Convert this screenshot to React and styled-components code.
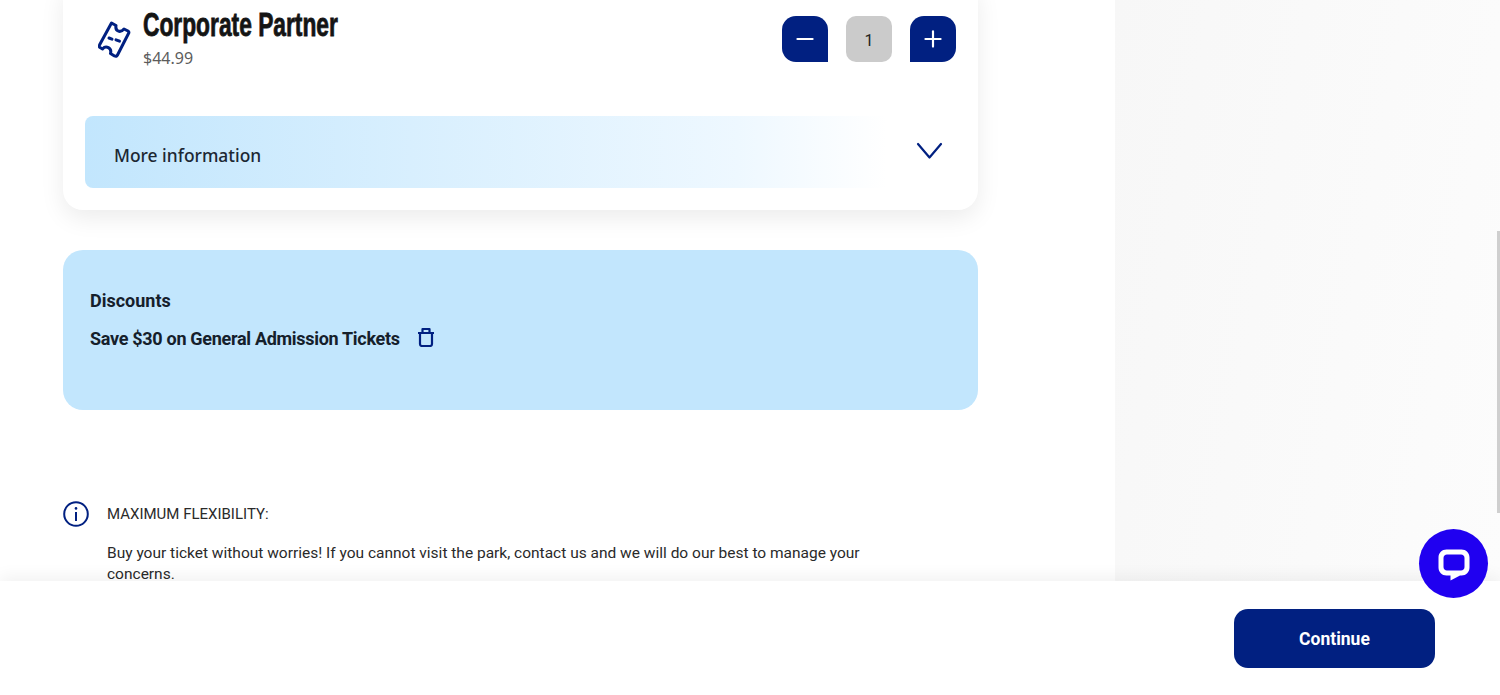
import React from 'react';
import styled, { createGlobalStyle } from 'styled-components';
import { Minus, Plus } from 'lucide-react';

const navy = '#012081';

const Global = createGlobalStyle`
	html, body {
		margin: 0;
		height: 100%;
		overflow: hidden;
		background: #fff;
	}
	* {
		box-sizing: border-box;
	}
`;

const TicketIcon = () => (
	<svg width="34" height="38" viewBox="7 4 34 38" fill="none" stroke={navy} strokeWidth="3" strokeLinejoin="round" strokeLinecap="round" style={{ flexShrink: 0 }}>
		<path d="M20.5 7 L25 9.5 C24 15 29 17.5 33 13 L37 15 Q38.5 16 37.5 17.5 L26.5 39 Q25.5 41 23.5 40 L19.5 37.5 C21 32 15 29 11.5 33 L9 31.5 Q7.5 30.5 8.5 29 Z" />
		<path d="M18 22 L21 23.2 M25 23.8 L28.5 25.2" />
	</svg>
);

const TrashIcon = () => (
	<svg width="18" height="20" viewBox="0 0 18 20" fill="none" stroke={navy} strokeWidth="2.2" strokeLinejoin="round">
		<path d="M3 6 H15 V17 Q15 19 13 19 H5 Q3 19 3 17 Z" />
		<path d="M1 6 H17 M5.5 6 V2 H12.5 V6" />
	</svg>
);

const InfoIcon = () => (
	<svg width="26" height="26" viewBox="0 0 26 26" fill="none" stroke={navy} strokeWidth="2" style={{ flexShrink: 0 }}>
		<circle cx="13" cy="13" r="11.8" />
		<path d="M13 11 V20" />
		<circle cx="13" cy="7.4" r="1.3" fill={navy} stroke="none" />
	</svg>
);

const ChevronIcon = () => (
	<svg width="27" height="18" viewBox="0 0 27 18" fill="none" stroke={navy} strokeWidth="2.2" strokeLinecap="round" strokeLinejoin="round">
		<path d="M2 2 L13.5 15.5 L25 2" />
	</svg>
);

const ChatIcon = () => (
	<svg width="34" height="34" viewBox="0 0 34 34" fill="none">
		<path
			fillRule="evenodd"
			clipRule="evenodd"
			fill="#fff"
			d="M9.5 2.5 H24.5 C29 2.5 32.5 6 32.5 10.5 V20.5 C32.5 25 29 28.5 24.5 28.5 H23 L13.5 33.5 V28.5 H9.5 C5 28.5 1.5 25 1.5 20.5 V10.5 C1.5 6 5 2.5 9.5 2.5 Z M10 7.5 C8 7.5 6.5 9 6.5 11 V20 C6.5 22 8 23.5 10 23.5 H24 C26 23.5 27.5 22 27.5 20 V11 C27.5 9 26 7.5 24 7.5 Z"
		/>
	</svg>
);

const App = () => {
	return (
		<Page>
			<Global />
			<Body>
				<Main>
					<Card>
						<TicketRow>
							<TicketInfo>
								<TicketIcon />
								<div>
									<TicketName>Corporate Partner</TicketName>
									<Price>$44.99</Price>
								</div>
							</TicketInfo>
							<Stepper>
								<StepButton side="left">
									<Minus size={26} strokeWidth={2} />
								</StepButton>
								<Qty>1</Qty>
								<StepButton side="right">
									<Plus size={26} strokeWidth={2} />
								</StepButton>
							</Stepper>
						</TicketRow>
						<MoreInfo>
							<span>More information</span>
							<ChevronIcon />
						</MoreInfo>
					</Card>

					<Discounts>
						<DiscountTitle>Discounts</DiscountTitle>
						<DiscountLine>
							Save $30 on General Admission Tickets
							<TrashIcon />
						</DiscountLine>
					</Discounts>

					<Notice>
						<InfoIcon />
						<NoticeText>
							<NoticeTitle>MAXIMUM FLEXIBILITY:</NoticeTitle>
							<NoticeBody>
								Buy your ticket without worries! If you cannot visit the park, contact us and we will do our best to manage your concerns.
							</NoticeBody>
						</NoticeText>
					</Notice>
				</Main>
				<Aside />
			</Body>
			<Footer>
				<ContinueButton>Continue</ContinueButton>
			</Footer>
			<ChatBubble>
				<ChatIcon />
			</ChatBubble>
			<ScrollThumb />
		</Page>
	);
};

const Page = styled.div`
	position: relative;
	display: flex;
	flex-direction: column;
	width: 1500px;
	height: 695px;
	overflow: hidden;
	font-family: 'Roboto', 'Liberation Sans', sans-serif;
`;

const Body = styled.div`
	display: flex;
	height: 581px;
	overflow: hidden;
`;

const Main = styled.main`
	width: 1115px;
	padding: 0 137px 0 63px;
`;

const Aside = styled.aside`
	flex: 1;
	background: linear-gradient(100deg, #f7f7f7 0%, #fcfcfc 100%);
`;

const Card = styled.section`
	margin-top: -20px;
	height: 230px;
	padding: 30px 22px 0;
	background: #fff;
	border-radius: 20px;
	box-shadow: 0 8px 24px rgba(0, 0, 0, 0.08);
`;

const TicketRow = styled.div`
	display: flex;
	justify-content: space-between;
	height: 106px;
`;

const TicketInfo = styled.div`
	display: flex;
	align-items: center;
	gap: 11px;
	height: 70px;
	padding-left: 13px;
	margin-top: -6px;
`;

const TicketName = styled.h2`
	margin: -2px 0 0;
	width: 195px;
	font-family: 'Liberation Sans', sans-serif;
	font-size: 33px;
	line-height: 36px;
	font-weight: 700;
	white-space: nowrap;
	color: #141414;
	-webkit-text-stroke: 0.8px #141414;
	transform: scaleX(0.69);
	transform-origin: left center;
`;

const Price = styled.div`
	margin-top: 4px;
	font-family: 'Noto Sans', sans-serif;
	font-size: 16px;
	line-height: 22px;
	color: #5c5c5c;
`;

const Stepper = styled.div`
	display: flex;
	gap: 18px;
	margin-top: 6px;
`;

const StepButton = styled.button`
	display: flex;
	align-items: center;
	justify-content: center;
	width: 46px;
	height: 46px;
	padding: 0;
	border: 0;
	color: #fff;
	background: ${navy};
	border-radius: ${(p) => (p.side === 'left' ? '14px 14px 0 14px' : '14px 14px 14px 0')};
`;

const Qty = styled.div`
	display: flex;
	align-items: center;
	justify-content: center;
	width: 46px;
	height: 46px;
	padding-top: 3px;
	font-size: 16px;
	color: #222;
	background: #cbcbcb;
	border-radius: 10px;
`;

const MoreInfo = styled.div`
	display: flex;
	align-items: center;
	justify-content: space-between;
	height: 72px;
	padding: 0 13px 0 29px;
	font-family: 'Noto Sans', sans-serif;
	font-size: 17.4px;
	font-weight: 500;
	color: #1c2733;
	background: linear-gradient(90deg, #c2e6fd 0%, #eef8ff 75%, #fff 92%);
	border-radius: 8px;

	span {
		padding-top: 5px;
	}

	svg {
		margin-top: -2px;
	}
`;

const Discounts = styled.section`
	height: 160px;
	margin-top: 40px;
	padding: 39px 27px 0;
	background: #c2e6fd;
	border-radius: 20px;
	color: #15202b;
`;

const DiscountTitle = styled.div`
	font-size: 18px;
	line-height: 24px;
	font-weight: 700;
`;

const DiscountLine = styled.div`
	display: flex;
	align-items: center;
	gap: 17px;
	margin-top: 14px;
	font-size: 18px;
	line-height: 24px;
	font-weight: 700;
	letter-spacing: -0.3px;

	svg {
		margin-top: -4px;
	}
`;

const Notice = styled.section`
	display: flex;
	align-items: flex-start;
	gap: 18px;
	margin-top: 91px;
`;

const NoticeText = styled.div`
	width: 770px;
	margin-top: 1px;
	color: #2a2a2a;
	font-size: 15.5px;
	line-height: 21px;
`;

const NoticeTitle = styled.div`
	margin-top: 2px;
	font-size: 15px;
`;

const NoticeBody = styled.div`
	margin-top: 18px;
`;

const Footer = styled.footer`
	position: relative;
	display: flex;
	justify-content: flex-end;
	height: 114px;
	padding: 28px 65px 0 0;
	background: #fff;
	box-shadow: 0 -4px 16px rgba(0, 0, 0, 0.06);
`;

const ContinueButton = styled.button`
	width: 201px;
	height: 59px;
	border: 0;
	border-radius: 14px;
	background: ${navy};
	color: #fff;
	font-family: 'Roboto', sans-serif;
	font-size: 17.5px;
	font-weight: 700;
`;

const ChatBubble = styled.div`
	position: absolute;
	left: 1419px;
	top: 529px;
	display: flex;
	align-items: center;
	justify-content: center;
	width: 69px;
	height: 69px;
	border-radius: 50%;
	background: #2000f0;
`;

const ScrollThumb = styled.div`
	position: absolute;
	right: 0;
	top: 231px;
	width: 3px;
	height: 282px;
	background: #cfcfcf;
`;

export default App;
